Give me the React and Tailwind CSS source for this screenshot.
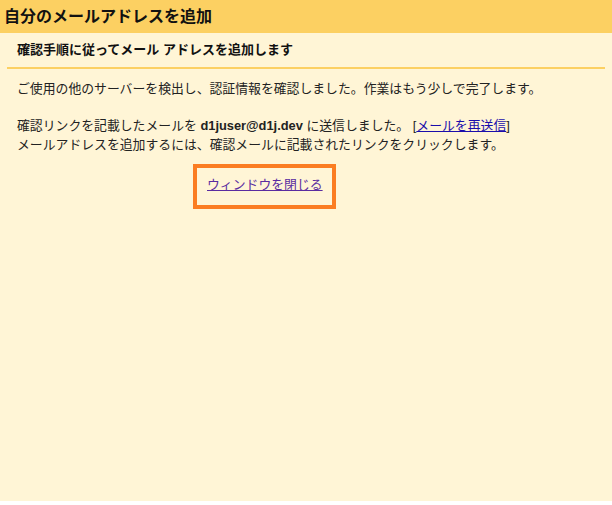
export default function App() {
  return (
    <div
      className="w-[612px] h-[505px] bg-white"
      style={{ fontFamily: '"Liberation Sans", "Noto Sans CJK JP", sans-serif' }}
    >
      <div className="h-[501px] bg-[#fff5d6] flex flex-col">
        {/* Header */}
        <div className="h-[33px] bg-[#fcd062] flex items-center px-[4px]">
          <h1 className="text-[16px] font-bold text-[#111]">自分のメールアドレスを追加</h1>
        </div>

        {/* Subheading */}
        <div className="h-[34px] flex items-center px-[17px]">
          <h2 className="text-[13px] font-bold text-[#111]">確認手順に従ってメール アドレスを追加します</h2>
        </div>
        <div className="mx-[7px] h-[2px] bg-[#fcd062]" />

        <div className="px-[17px] text-[12.85px] text-[#222] leading-[19px]">
          <p className="mt-[10px]">
            ご使用の他のサーバーを検出し、認証情報を確認しました。作業はもう少しで完了します。
          </p>
          <p className="mt-[18px]">
            確認リンクを記載したメールを <b>d1juser@d1j.dev</b> に送信しました。 [
            <a href="#" className="text-[#1a0dab] underline">メールを再送信</a>]
            <br />
            メールアドレスを追加するには、確認メールに記載されたリンクをクリックします。
          </p>
          <div className="mt-[10px] ml-[176px] w-[143px] h-[45px] border-[4px] border-[#fb7d22] flex items-center pl-[10px] pb-[4px]">
            <a href="#" className="text-[#5a2ca0] underline">ウィンドウを閉じる</a>
          </div>
        </div>
      </div>
    </div>
  )
}
